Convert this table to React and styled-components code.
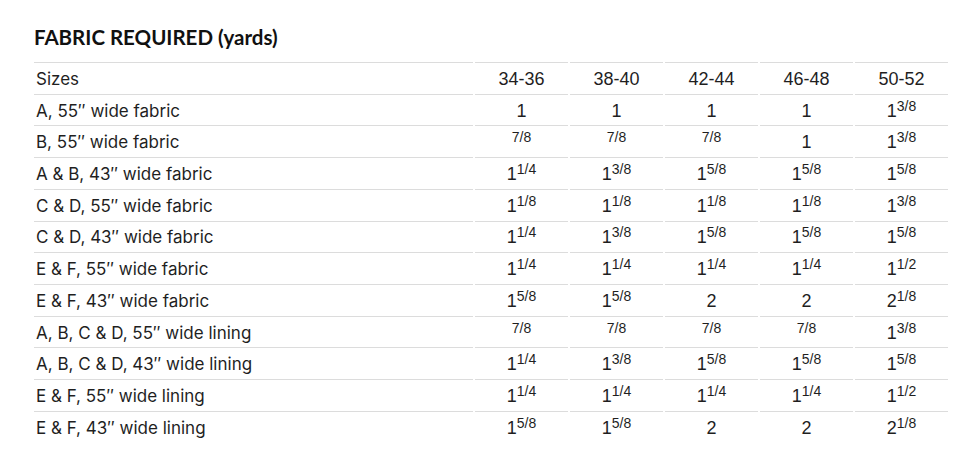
import React from "react";
import styled, { createGlobalStyle } from "styled-components";

const GlobalStyle = createGlobalStyle`
  body {
    margin: 0;
    background: #ffffff;
    color: #1f1f1f;
  }
`;

const sizes = ["34-36", "38-40", "42-44", "46-48", "50-52"];

// each value: [whole, fraction]
const rows = [
  ["A, 55\u2033 wide fabric", [["1"], ["1"], ["1"], ["1"], ["1", "3/8"]]],
  ["B, 55\u2033 wide fabric", [["", "7/8"], ["", "7/8"], ["", "7/8"], ["1"], ["1", "3/8"]]],
  ["A & B, 43\u2033 wide fabric", [["1", "1/4"], ["1", "3/8"], ["1", "5/8"], ["1", "5/8"], ["1", "5/8"]]],
  ["C & D, 55\u2033 wide fabric", [["1", "1/8"], ["1", "1/8"], ["1", "1/8"], ["1", "1/8"], ["1", "3/8"]]],
  ["C & D, 43\u2033 wide fabric", [["1", "1/4"], ["1", "3/8"], ["1", "5/8"], ["1", "5/8"], ["1", "5/8"]]],
  ["E & F, 55\u2033 wide fabric", [["1", "1/4"], ["1", "1/4"], ["1", "1/4"], ["1", "1/4"], ["1", "1/2"]]],
  ["E & F, 43\u2033 wide fabric", [["1", "5/8"], ["1", "5/8"], ["2"], ["2"], ["2", "1/8"]]],
  ["A, B, C & D, 55\u2033 wide lining", [["", "7/8"], ["", "7/8"], ["", "7/8"], ["", "7/8"], ["1", "3/8"]]],
  ["A, B, C & D, 43\u2033 wide lining", [["1", "1/4"], ["1", "3/8"], ["1", "5/8"], ["1", "5/8"], ["1", "5/8"]]],
  ["E & F, 55\u2033 wide lining", [["1", "1/4"], ["1", "1/4"], ["1", "1/4"], ["1", "1/4"], ["1", "1/2"]]],
  ["E & F, 43\u2033 wide lining", [["1", "5/8"], ["1", "5/8"], ["2"], ["2"], ["2", "1/8"]]],
];

const Page = styled.div`
  padding: 24px 30px 0 32px;
`;

const Title = styled.h2`
  margin: 0 0 12px 2px;
  font-family: Lato, "Noto Sans", sans-serif;
  font-weight: 700;
  font-size: 20.5px;
  line-height: 26px;
  color: #111;
`;

const Table = styled.table`
  border-collapse: separate;
  border-spacing: 2px 0;
  table-layout: fixed;
  width: 918px;
`;

const Cell = styled.td`
  border-top: 1px solid #dcdcdc;
  height: 29.73px;
  padding: 1px 0 0 ${(p) => (p.$label ? "2px" : "0")};
  vertical-align: middle;
  font-size: ${(p) => (p.$label ? "17px" : "18px")};
  line-height: 20px;
  color: #1f1f1f;
  text-align: ${(p) => (p.$label ? "left" : "center")};
  font-family: ${(p) =>
    p.$label
      ? `Inter, "Noto Sans", sans-serif`
      : `"Liberation Sans", Arial, sans-serif`};
`;

const LabelCol = styled.col`
  width: 439px;
`;

const SizeCol = styled.col`
  width: 93px;
`;

const Frac = styled.sup`
  font-size: 14px;
  line-height: 0;
  vertical-align: 6px;
`;

const Amount = ({ value }) => (
  <>
    {value[0]}
    {value[1] && <Frac>{value[1]}</Frac>}
  </>
);

export default function App() {
  return (
    <Page>
      <GlobalStyle />
      <Title>FABRIC REQUIRED (yards)</Title>
      <Table>
        <colgroup>
          <LabelCol />
          {sizes.map((s) => (
            <SizeCol key={s} />
          ))}
        </colgroup>
        <tbody>
          <tr>
            <Cell $label>Sizes</Cell>
            {sizes.map((s) => (
              <Cell key={s}>{s}</Cell>
            ))}
          </tr>
          {rows.map(([label, values]) => (
            <tr key={label}>
              <Cell $label>{label}</Cell>
              {values.map((v, i) => (
                <Cell key={i}>
                  <Amount value={v} />
                </Cell>
              ))}
            </tr>
          ))}
        </tbody>
      </Table>
    </Page>
  );
}
